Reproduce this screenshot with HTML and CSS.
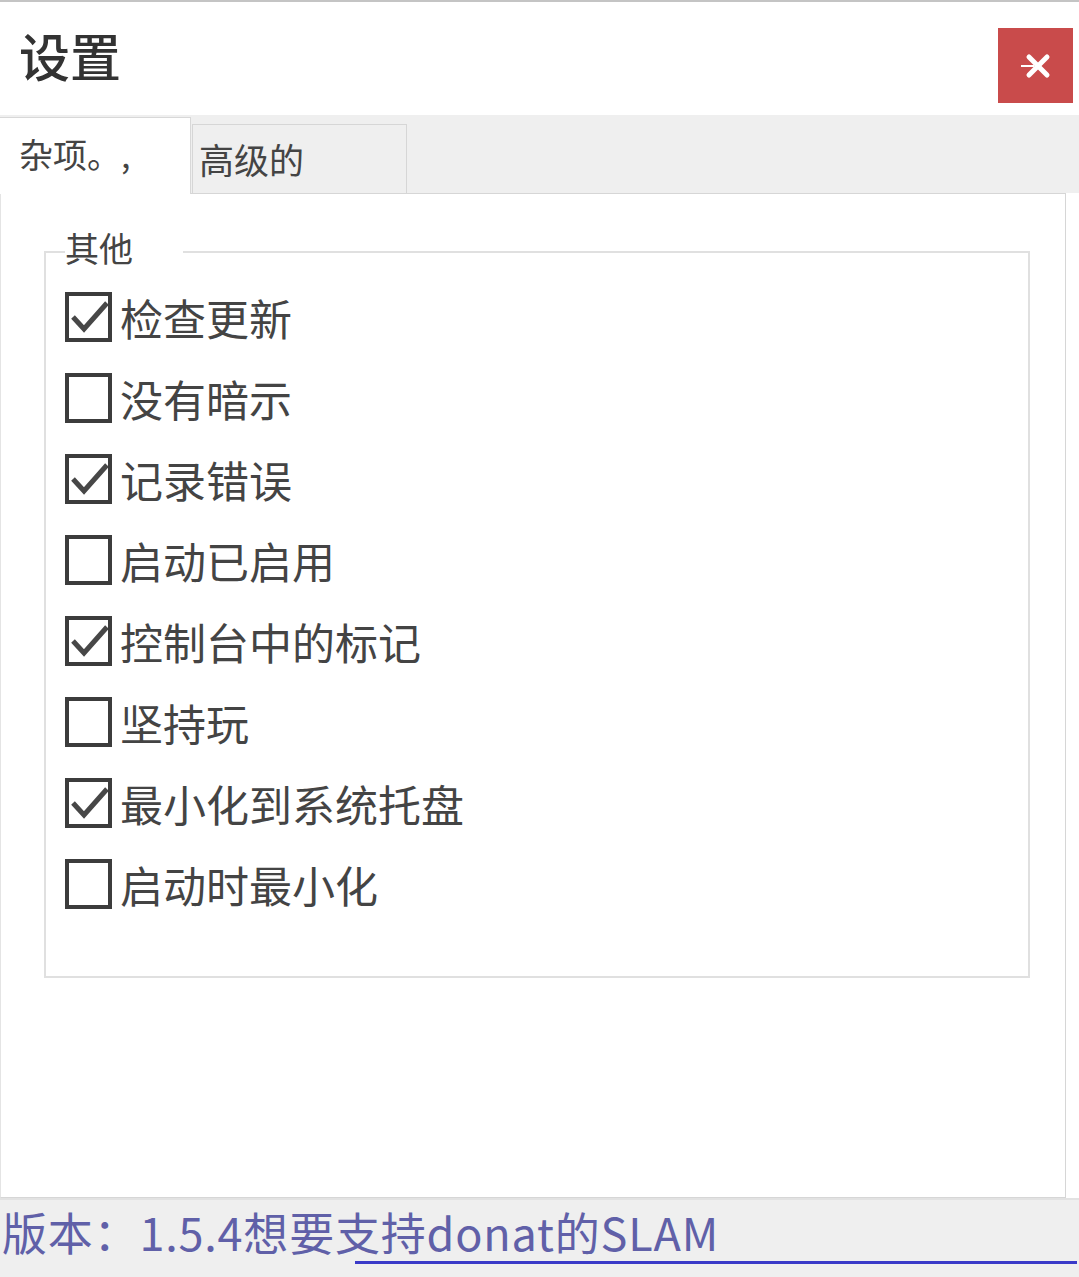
FILE: index.html
```html
<!DOCTYPE html>
<html lang="zh">
<head>
<meta charset="utf-8">
<title>设置</title>
<link rel="stylesheet" href="styles.css">
</head>
<body>
<div class="window">
  <header class="titlebar">
    <h1 class="title">设置</h1>
    <button class="close" aria-label="关闭">
      <svg width="36" height="36" viewBox="0 0 36 36">
        <line x1="3" y1="18" x2="16" y2="18" stroke="#fff" stroke-width="2"/>
        <line x1="11" y1="9" x2="29" y2="27" stroke="#fff" stroke-width="5" stroke-linecap="round"/>
        <line x1="29" y1="9" x2="11" y2="27" stroke="#fff" stroke-width="5" stroke-linecap="round"/>
      </svg>
    </button>
  </header>
  <nav class="tabs">
    <div class="tab active">杂项。,</div>
    <div class="tab">高级的</div>
  </nav>
  <main class="panel">
    <fieldset class="group">
      <legend class="legend">其他</legend>
      <ul class="options">
        <li class="opt"><span class="box"><svg class="tick" viewBox="0 0 39 42"><polyline points="4,21 15,33 38,7"/></svg></span><span class="lbl">检查更新</span></li>
        <li class="opt"><span class="box"></span><span class="lbl">没有暗示</span></li>
        <li class="opt"><span class="box"><svg class="tick" viewBox="0 0 39 42"><polyline points="4,21 15,33 38,7"/></svg></span><span class="lbl">记录错误</span></li>
        <li class="opt"><span class="box"></span><span class="lbl">启动已启用</span></li>
        <li class="opt"><span class="box"><svg class="tick" viewBox="0 0 39 42"><polyline points="4,21 15,33 38,7"/></svg></span><span class="lbl">控制台中的标记</span></li>
        <li class="opt"><span class="box"></span><span class="lbl">坚持玩</span></li>
        <li class="opt"><span class="box"><svg class="tick" viewBox="0 0 39 42"><polyline points="4,21 15,33 38,7"/></svg></span><span class="lbl">最小化到系统托盘</span></li>
        <li class="opt"><span class="box"></span><span class="lbl">启动时最小化</span></li>
      </ul>
    </fieldset>
  </main>
  <footer class="footer">
    <div class="version">版本：1.5.4想要支持donat的SLAM</div>
    <div class="link-line"></div>
  </footer>
</div>
</body>
</html>
```

FILE: styles.css
```css
* { box-sizing: border-box; }
html, body { margin: 0; padding: 0; }
body {
  width: 1079px;
  height: 1277px;
  overflow: hidden;
  background: #ffffff;
  font-family: "Noto Sans CJK SC", "Noto Sans", sans-serif;
  color: #444;
}
.window {
  width: 1079px;
  height: 1277px;
  border-top: 2px solid #c4c4c4;
  display: flex;
  flex-direction: column;
}
.titlebar {
  height: 113px;
  background: #fff;
  display: flex;
  align-items: flex-start;
  justify-content: space-between;
  padding: 0 6px 0 19px;
}
.title {
  margin: 20px 0 0 0;
  font-size: 51px;
  line-height: 66px;
  font-weight: 500;
  color: #333;
}
.close {
  margin-top: 26px;
  width: 75px;
  height: 75px;
  border: none;
  background: #c94b4b;
  display: flex;
  align-items: center;
  justify-content: center;
  padding: 0;
}
.tabs {
  height: 78px;
  background: #efefef;
  display: flex;
  align-items: flex-end;
  padding-right: 13px;
}
.tab {
  font-size: 34px;
  line-height: 40px;
  color: #444;
}
.tab.active {
  width: 191px;
  height: 77px;
  background: #fff;
  border-top: 1px solid #d8d8d8;
  border-right: 1px solid #d8d8d8;
  padding: 16px 0 0 19px;
  margin-bottom: -1px;
  position: relative;
  z-index: 1;
}
.tab:not(.active) {
  width: 215px;
  height: 69px;
  background: #efefef;
  border: 1px solid #d6d6d6;
  border-bottom: none;
  margin-left: 1px;
  padding: 14px 0 0 6px;
  font-size: 35px;
}
.panel {
  height: 1005px;
  margin-right: 13px;
  background: #fff;
  border: 1px solid #d6d6d6;
  border-left-color: #e4e4e4;
  padding: 34px 35px 0 43px;
}
.group {
  margin: 0;
  border: 2px solid #e0e0e0;
  padding: 0 0 71px 19px;
  height: 750px;
}
.legend {
  font-size: 34px;
  line-height: 40px;
  padding: 0 50px 8px 0;
  margin-left: 0;
  color: #444;
}
.options {
  list-style: none;
  margin: 17px 0 0 0;
  padding: 0;
  display: flex;
  flex-direction: column;
  gap: 33px;
}
.opt {
  height: 48px;
  display: flex;
  align-items: center;
  gap: 8px;
}
.box {
  width: 47px;
  height: 50px;
  border: 4px solid #3c3c3c;
  flex: none;
  background: #fff;
  display: block;
}
.tick {
  display: block;
  width: 39px;
  height: 42px;
  fill: none;
  stroke: #474747;
  stroke-width: 5;
  stroke-linejoin: miter;
}
.lbl {
  font-size: 43px;
  line-height: 48px;
  color: #444;
  white-space: nowrap;
}
.footer {
  flex: 1;
  background: #efefef;
  border-top: 2px solid #e2e2e2;
  padding: 5px 0 0 2px;
}
.version {
  font-size: 45px;
  line-height: 54px;
  color: #6060a8;
  white-space: nowrap;
  letter-spacing: 0.8px;
}
.link-line {
  margin-left: 353px;
  width: 722px;
  height: 3px;
  background: #3a3ac8;
  margin-top: 2px;
}
```
